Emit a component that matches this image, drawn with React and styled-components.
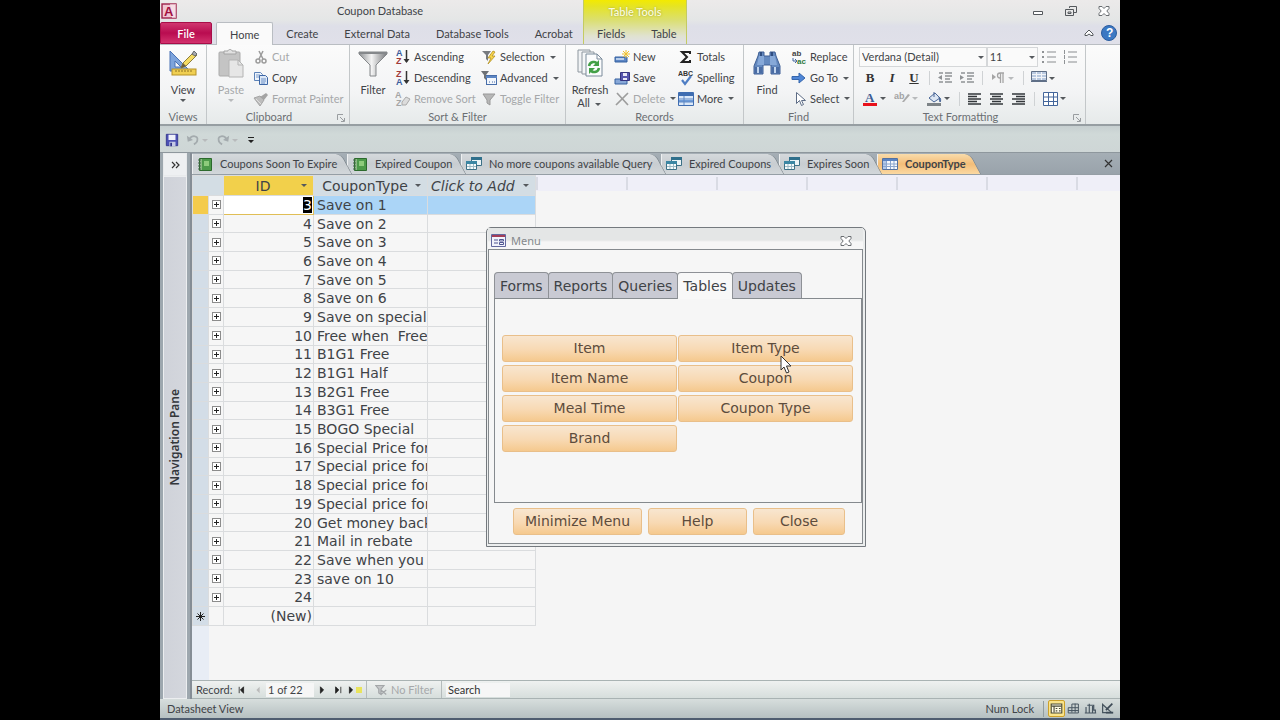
import { useState } from 'react';
import styled, { createGlobalStyle, css } from 'styled-components';

const colors = {
  text: '#3f4347',
  muted: '#a6a8aa',
  line: '#9aa3a8',
  strip: '#9da7ae',
  orange: '#f5c98e',
};

const uiFont = `Lato, 'Noto Sans', sans-serif`;
const sheetFont = `'DejaVu Sans', Verdana, sans-serif`;

const GlobalStyle = createGlobalStyle`
  * {
    box-sizing: border-box;
  }
  body {
    margin: 0;
    background: #000;
    font-family: ${uiFont};
    font-size: 11px;
    line-height: 16px;
    color: ${colors.text};
  }
  button, input, select {
    font: inherit;
    color: inherit;
    margin: 0;
    padding: 0;
    border: 0;
    background: none;
  }
  svg {
    display: block;
    flex: none;
  }
`;

const Screen = styled.div`
  display: flex;
  flex-direction: column;
  width: 75%;
  min-width: 960px;
  min-height: 100vh;
  margin: 0 auto;
  background: #cdd6d6;
  overflow: hidden;
`;

/* title bar and ribbon tabs */

const Header = styled.header`
  display: flex;
  height: 44px;
  background: linear-gradient(#eceaea, #e4e6e6 20px, #dedfe8 26px, #e0e0e9);
`;

const HeaderMain = styled.div`
  width: 423px;
`;

const TitleRow = styled.div`
  display: flex;
  align-items: center;
  height: 22px;
  padding-left: 1px;
`;

const Title = styled.h1`
  flex: 1;
  margin: 0;
  font-size: 11px;
  font-weight: 400;
  text-align: center;
`;

const TabRow = styled.nav`
  display: flex;
  height: 22px;
`;

const RibbonTab = styled.button`
  flex: none;
  padding: 1px 13px 0;
  height: 22px;
  white-space: nowrap;
  ${({ $file }) =>
    $file &&
    css`
      width: 52px;
      margin-right: 4px;
      color: #fff;
      font-weight: 600;
      border: 1px solid #a80d48;
      border-radius: 2px 2px 0 0;
      background: linear-gradient(#d0356f, #b90c50 50%, #d3326d);
    `}
  ${({ $active }) =>
    $active &&
    css`
      height: 23px;
      border: 1px solid #b9bdc2;
      border-bottom: 0;
      border-radius: 2px 2px 0 0;
      background: #fafafa;
      z-index: 1;
    `}
`;

const ContextGroup = styled.div`
  width: 104px;
  border: solid #c4cb62;
  border-width: 0 1px;
  background: linear-gradient(#f3ea00, #e6e422 6px, #dbdf70 20px, #e0e2d0 36px, #e0e0e9);
`;

const ContextTitle = styled.div`
  height: 22px;
  padding-top: 4px;
  text-align: center;
  font-weight: 600;
  color: #fbfbd8;
  text-shadow: 0 0 2px #98993a;
`;

const HeaderSide = styled.div`
  flex: 1;
  display: flex;
  flex-direction: column;
`;

const WindowButtons = styled.div`
  display: flex;
  justify-content: flex-end;
  align-items: center;
  gap: 21px;
  height: 22px;
  padding-right: 10px;
`;

const HelpButtons = styled.div`
  display: flex;
  justify-content: flex-end;
  align-items: center;
  gap: 7px;
  height: 22px;
  padding-right: 3px;
`;

/* ribbon */

const Ribbon = styled.section`
  display: flex;
  height: 82px;
  border-top: 1px solid #b9bdc2;
  border-bottom: 2px solid #969ea2;
  background: linear-gradient(#fbfbfb, #f3f4f5 60%, #e6eaea);
`;

const Group = styled.div`
  display: flex;
  flex-direction: column;
  width: ${({ $width }) => $width}px;
  border-right: 1px solid #c3c7c9;
`;

const GroupBody = styled.div`
  display: flex;
  height: 64px;
  padding: 2px 0 0 ${({ $pad }) => $pad}px;
  gap: ${({ $gap }) => $gap || 8}px;
`;

const GroupLabel = styled.div`
  display: flex;
  justify-content: center;
  align-items: center;
  height: 15px;
  padding-right: ${({ $pad = 6 }) => $pad}px;
  color: #6b6f73;
  position: relative;
`;

const Launcher = styled.button`
  position: absolute;
  right: 4px;
  top: 5px;
`;

const LargeButton = styled.button`
  display: flex;
  flex-direction: column;
  align-items: center;
  line-height: 13px;
  width: ${({ $width }) => $width || 32}px;
  white-space: nowrap;
  &:disabled {
    color: ${colors.muted};
  }
  & svg:first-child {
    margin: 1px 0 3px;
  }
`;

const SmallColumn = styled.div`
  display: flex;
  flex-direction: column;
  width: ${({ $width }) => $width}px;
`;

const SmallButton = styled.button`
  display: flex;
  align-items: center;
  gap: 3px;
  height: 21px;
  white-space: nowrap;
  &:disabled {
    color: ${colors.muted};
  }
`;

const Caret = styled.span`
  border: solid transparent;
  border-width: 3px 3px 0;
  border-top-color: ${({ $faded }) => ($faded ? '#b8babc' : '#55595d')};
  margin: ${({ $below }) => ($below ? '3px 0 0' : '0 2px')};
  display: inline-block;
  vertical-align: middle;
`;

const FormatArea = styled.div`
  display: flex;
  flex-direction: column;
  height: 64px;
  padding: 2px 4px 0 5px;
`;

const FormatRow = styled.div`
  display: flex;
  align-items: center;
  height: 21px;
`;

const SelectBox = styled.label`
  display: flex;
  align-items: center;
  width: ${({ $width }) => $width}px;
  height: 20px;
  border: 1px solid #d5d7d9;
  background: #fafafa;
  & select {
    flex: 1;
    min-width: 0;
    appearance: none;
    padding-left: 2px;
    outline: 0;
  }
`;

const ToolButton = styled.button`
  display: flex;
  align-items: center;
  justify-content: center;
  width: ${({ $width }) => $width || 22}px;
  height: 20px;
`;

const Glyph = styled.span`
  font-family: 'Liberation Serif', serif;
  font-size: 13px;
  font-weight: 700;
  font-style: ${({ $italic }) => ($italic ? 'italic' : 'normal')};
  text-decoration: ${({ $underline }) => ($underline ? 'underline' : 'none')};
  color: #333;
`;

const Divider = styled.span`
  width: 1px;
  height: 14px;
  margin: 0 4px;
  background: #cfd2d4;
`;

const QuickAccess = styled.div`
  display: flex;
  align-items: center;
  gap: 8px;
  height: 27px;
  padding: 2px 0 0 5px;
  background: linear-gradient(#c6cfd0, #d0d9d8 8px, #ced6d6);
  border-bottom: 1px solid #8e979d;
`;

/* work area */

const WorkArea = styled.main`
  display: flex;
  flex: 1;
  position: relative;
`;

const NavPane = styled.aside`
  display: flex;
  flex-direction: column;
  width: 32px;
  padding: 0 3px 0 3px;
  background: ${colors.strip};
  border-right: 2px solid #858d95;
`;

const NavToggle = styled.button`
  display: flex;
  align-items: center;
  justify-content: center;
  height: 23px;
  border: 1px solid #e8eaec;
  background: #eef0f2;
`;

const NavBody = styled.div`
  flex: 1;
  display: flex;
  align-items: center;
  justify-content: center;
  border: 1px solid #eceef0;
  background: linear-gradient(90deg, #cfd2d9, #d4d7dd);
  & span {
    writing-mode: vertical-rl;
    transform: rotate(180deg);
    font-family: 'Noto Sans', sans-serif;
    font-size: 12px;
    font-weight: 600;
    color: #34373b;
  }
`;

const Document = styled.div`
  display: flex;
  flex-direction: column;
  flex: 1;
  min-width: 0;
`;

const DocTabs = styled.div`
  display: flex;
  height: 22px;
  background: linear-gradient(#a5aeb5, #99a3ab);
  border-bottom: 1px solid #959ea5;
`;

const DocTab = styled.button`
  display: flex;
  align-items: center;
  gap: 7px;
  width: ${({ $width }) => $width}px;
  padding-left: 5px;
  font-weight: ${({ $active }) => ($active ? 700 : 400)};
  white-space: nowrap;
  position: relative;
  isolation: isolate;
  z-index: ${({ $order }) => $order};
  &::before,
  &::after {
    content: '';
    position: absolute;
    z-index: -1;
    top: 1px;
    bottom: 0;
    background: ${({ $active }) =>
      $active
        ? 'linear-gradient(#f9dcab, #f3bd78 50%, #fbd9a2)'
        : 'linear-gradient(#d5d9dc, #c8cdd1 50%, #d2d7da)'};
  }
  &::before {
    right: 0;
    width: 40px;
    border-right: 1px solid #828b91;
    border-top-right-radius: 6px;
    transform: skewX(28deg);
  }
  &::after {
    left: 0;
    right: 24px;
    border-left: 1px solid #eef0f1;
  }
`;

const DocClose = styled.button`
  margin: 0 7px 0 auto;
`;

const Sheet = styled.div`
  flex: 1;
  background:
    repeating-linear-gradient(90deg, transparent 0 74px, #d9dbe4 74px 76px, transparent 76px 90px) 0 2px / 100% 13px no-repeat,
    linear-gradient(#efeff8, #efeff8) 0 0 / 100% 16px no-repeat,
    linear-gradient(90deg, #e8edf5 17px, #f5f5f5 17px);
`;

const Grid = styled.table`
  width: 343px;
  height: 451px;
  table-layout: fixed;
  border-collapse: collapse;
  font-family: ${sheetFont};
  font-size: 14px;
  line-height: 16px;
  background: #f6f6f6;
  & th {
    height: 20px;
  }
  & td,
  & th {
    padding: 0;
    border: 1px solid #dadcde;
    white-space: nowrap;
    overflow: hidden;
  }
`;

const HeadCell = styled.th`
  font-weight: 400;
  font-style: ${({ $italic }) => ($italic ? 'italic' : 'normal')};
  background: ${({ $active }) => ($active ? '#f2d04b' : '#d3dde4')};
`;

const HeadInner = styled.div`
  display: flex;
  align-items: center;
  justify-content: space-between;
  padding: 0 4px 0 3px;
  & > span:first-child {
    flex: 1;
    text-align: ${({ $left }) => ($left ? 'left' : 'center')};
  }
`;

const Row = styled.tr`
  ${({ $current }) =>
    $current &&
    css`
      background: #abd5f7;
    `}
`;

const Selector = styled.td`
  background: ${({ $current }) => ($current ? '#f4cb4c' : '#d3dde7')};
  color: #222;
  & svg {
    margin: 0 auto;
  }
`;

const ExpandCell = styled.td`
  background: #f6f6f6;
`;

const ExpandButton = styled.button`
  display: flex;
  align-items: center;
  justify-content: center;
  width: 9px;
  height: 9px;
  margin: 0 auto;
  border: 1px solid #8c8c8c;
  background: #fff;
`;

const IdCell = styled.td`
  text-align: right;
  && {
    padding-right: 1px;
  }
  ${({ $current }) =>
    $current &&
    css`
      background: #fff;
      && {
        border-color: #e0be55;
      }
    `}
  & mark {
    color: #fff;
    background: #000;
  }
`;

const NameCell = styled.td`
  && {
    padding-left: 3px;
    white-space: pre;
  }
`;

const RecordBar = styled.div`
  display: flex;
  align-items: center;
  height: 19px;
  padding-left: 4px;
  border-top: 1px solid #a9b3b3;
  border-bottom: 1px solid #a9b3b3;
  background: linear-gradient(#eff1f0, #d6dedc);
  & label {
    width: 38px;
  }
`;

const RecordInput = styled.input`
  width: ${({ $width }) => $width}px;
  height: 14px;
  padding-left: 2px;
  background: #f6f6f6;
  outline: 0;
  &::placeholder {
    color: #333;
    opacity: 1;
  }
`;

const RecordButton = styled.button`
  display: flex;
  justify-content: center;
  width: 16px;
`;

const NoFilter = styled.button`
  display: flex;
  align-items: center;
  gap: 4px;
  width: 76px;
  height: 17px;
  margin: 0 4px;
  padding-left: 8px;
  color: ${colors.muted};
  border: solid #b4bbbb;
  border-width: 0 1px;
`;

const StatusBar = styled.footer`
  display: flex;
  align-items: center;
  height: 21px;
  padding: 0 4px 0 7px;
  background: linear-gradient(#d7dedd, #b6c0c1);
  border-bottom: 2px solid #4f5d70;
`;

const StatusRight = styled.div`
  display: flex;
  align-items: center;
  margin-left: auto;
  & > span {
    padding-right: 9px;
    margin-right: 4px;
    border-right: 1px solid #939d9f;
  }
`;

const ViewButton = styled.button`
  display: flex;
  align-items: center;
  justify-content: center;
  width: 17px;
  height: 17px;
  border: 1px solid ${({ $active }) => ($active ? '#cda12b' : 'transparent')};
  border-radius: 2px;
  background: ${({ $active }) => ($active ? '#fbe48a' : 'none')};
`;

/* floating menu form */

const MenuWindow = styled.section`
  position: absolute;
  left: 326px;
  top: 74px;
  width: 380px;
  padding: 0 2px 2px 1px;
  border: 1px solid #74797e;
  border-radius: 5px 5px 0 0;
  background: #eceeee;
  font-family: ${sheetFont};
  font-size: 14px;
  z-index: 10;
`;

const MenuTitle = styled.div`
  display: flex;
  align-items: center;
  gap: 4px;
  height: 21px;
  padding: 5px 11px 0 3px;
  background: linear-gradient(#e4e6e6 12px, #f6f6f6 14px);
  font-family: 'Noto Sans', sans-serif;
  font-size: 11px;
  color: #85898c;
  & button {
    margin-left: auto;
  }
`;

const MenuBody = styled.div`
  padding: 22px 0 8px 5px;
  border: 1px solid #858a8e;
  background: #f6f6f6;
`;

const MenuTabs = styled.div`
  display: flex;
  height: 26px;
`;

const MenuTab = styled.button`
  padding: 0 5px;
  margin-right: -1px;
  border: 1px solid #8e9196;
  border-bottom: 0;
  border-radius: 4px 4px 0 0;
  white-space: nowrap;
  background: ${({ $active }) => ($active ? '#f8f8f8' : '#c9cad3')};
  ${({ $active }) =>
    $active &&
    css`
      height: 27px;
      z-index: 1;
    `}
`;

const MenuPanel = styled.div`
  display: grid;
  grid-template-columns: 1fr 1fr;
  grid-auto-rows: 27px;
  align-content: start;
  gap: 3px 1px;
  height: 205px;
  padding: 36px 8px 0 7px;
  border: 1px solid #858a8e;
`;

const FormButton = styled.button`
  height: 27px;
  width: ${({ $width }) => ($width ? `${$width}px` : 'auto')};
  padding-bottom: 2px;
  border: 1px solid #e9bf8a;
  border-radius: 3px;
  color: #5d4c3c;
  background: linear-gradient(#f8e6d0, #f8d9b3 55%, ${colors.orange});
`;

const MenuFooter = styled.div`
  display: flex;
  gap: 6px;
  padding: 5px 0 0 19px;
`;

const Pointer = styled.svg`
  position: absolute;
  left: 620px;
  top: 202px;
  z-index: 20;
`;

const Icon = ({ size = 16, children }) => (
  <svg width={size} height={size} viewBox="0 0 16 16" fill="none" aria-hidden="true">
    {children}
  </svg>
);

const BigIcon = ({ children }) => (
  <svg width="32" height="32" viewBox="0 0 32 32" fill="none" aria-hidden="true">
    {children}
  </svg>
);

const glyphText = { fontFamily: 'Liberation Sans, sans-serif', fontWeight: 700 };

const AccessLogo = () => (
  <Icon>
    <rect x="1" y="1" width="14" height="14" fill="#f0c5d3" stroke="#9d2049" strokeWidth="1.4" />
    <path d="M9 1h6v14h-4z" fill="#fbeef2" opacity=".6" />
    <text x="3" y="13" fontSize="13" fill="#a1103f" style={glyphText}>A</text>
  </Icon>
);

const CloseX = ({ size = 12 }) => (
  <svg width={size} height={size} viewBox="0 0 12 12" fill="#fff" aria-hidden="true">
    <path d="M1 1.500h3l2 2 2-2h3v2L8.800 6 11 8.500v2H8l-2-2-2 2H1v-2L3.200 6 1 3.500z" stroke="#6a6e72" strokeWidth="1" />
  </svg>
);

const ViewIcon = () => (
  <BigIcon>
    <path d="M3 3v20h20z" fill="#7da4dc" stroke="#4a72b5" />
    <path d="M8 13v6h6z" fill="#f5f7fa" stroke="#4a72b5" />
    <rect x="5" y="21" width="24" height="6" fill="#f0cf52" stroke="#b69227" />
    <path d="M9 22v2m3-2v2m3-2v2m3-2v2m3-2v2m3-2v2" stroke="#8f7220" />
    <path d="M14 20l2-5L27 4l3 3-11 11z" fill="#f5dc63" stroke="#8c7d3d" />
    <path d="M25 6l2-3 3 3-2 2z" fill="#a5a8ad" stroke="#66696e" />
    <path d="M14 20l2-5 3 3z" fill="#675b40" />
  </BigIcon>
);

const PasteIcon = () => (
  <BigIcon>
    <rect x="4" y="4" width="21" height="24" rx="1" fill="#c4c4c4" stroke="#ababab" />
    <path d="M9 6V3h4c0-2 4-2 4 0h4v3z" fill="#e1e1e1" stroke="#a4a4a4" />
    <path d="M14 12h9l5 5v12H14z" fill="#e6e6e6" stroke="#b4b4b4" />
    <path d="M23 12v5h5" stroke="#b4b4b4" />
  </BigIcon>
);

const FilterIcon = () => (
  <BigIcon>
    <defs>
      <linearGradient id="funnel">
        <stop offset="0" stopColor="#8c8f92" />
        <stop offset=".45" stopColor="#f4f4f4" />
        <stop offset="1" stopColor="#77797c" />
      </linearGradient>
    </defs>
    <path d="M2 4h28v2L19 17v11h-6V17L2 6z" fill="url(#funnel)" stroke="#85888b" />
    <path d="M2 4h28v2H2z" fill="#85888b" />
  </BigIcon>
);

const RefreshIcon = () => (
  <BigIcon>
    <path d="M4 2h12v22H4z" fill="#f1f3f5" stroke="#8e979f" />
    <path d="M8 4h12v22H8z" fill="#f5f7f8" stroke="#8e979f" />
    <path d="M12 6h11l5 5v17H12z" fill="#fbfcfd" stroke="#7b8b9b" />
    <path d="M23 6v5h5" stroke="#7b8b9b" />
    <path d="M15 18c1-5 7-5 8-2" stroke="#43a047" strokeWidth="2.500" />
    <path d="M25 12v6h-6z" fill="#43a047" />
    <path d="M25 20c-1 5-7 5-8 2" stroke="#43a047" strokeWidth="2.500" />
    <path d="M15 26v-6h6z" fill="#43a047" />
  </BigIcon>
);

const FindIcon = () => (
  <BigIcon>
    <path d="M8 4h5v4h6V4h5l1 4 4 10v8h-9v-9h-8v9H3v-8L7 8z" fill="#6489bf" stroke="#3e5f95" />
    <path d="M8 8h5v9H6zM19 8h5l2 9h-7z" fill="#86a8d8" />
    <path d="M4 19h7v6H4zM21 19h7v6h-7z" fill="#4a6ca4" />
    <path d="M6 19h2v6H6zM23 19h2v6h-2z" fill="#c1d5ee" />
    <path d="M9 4h2v4H9zM20 4h2v4h-2z" fill="#2f4d80" />
  </BigIcon>
);

const CutIcon = () => (
  <Icon>
    <path d="M6 2l4 8M10 2L6 10" stroke="#9b9b9b" strokeWidth="1.500" />
    <circle cx="5" cy="12" r="2" stroke="#9b9b9b" strokeWidth="1.500" />
    <circle cx="11" cy="12" r="2" stroke="#9b9b9b" strokeWidth="1.500" />
  </Icon>
);

const CopyIcon = () => (
  <Icon>
    <path d="M1.500 2.500h6l2 2v6h-8z" fill="#eef4fb" stroke="#5c82b8" />
    <path d="M3 5h4M3 7h4" stroke="#7d9ccb" />
    <path d="M6.500 5.500h6l2 2v7h-8z" fill="#dce8f7" stroke="#3d66a5" />
    <path d="M8 9h5M8 11h5M8 13h4" stroke="#6d90c6" />
  </Icon>
);

const PainterIcon = () => (
  <Icon>
    <path d="M1 7l6-2 4 4-4 6z" fill="#bdbdbd" stroke="#a5a5a5" />
    <path d="M7 6l6-4 2 2-4 5z" fill="#a4a4a4" />
    <path d="M3 8l5 5" stroke="#dedede" />
  </Icon>
);

const SortIcon = ({ top, bottom, topColor, bottomColor }) => (
  <Icon>
    <text x="1" y="7" fontSize="9" fill={topColor} style={glyphText}>{top}</text>
    <text x="1" y="15" fontSize="9" fill={bottomColor} style={glyphText}>{bottom}</text>
    <path d="M11.500 1v12" stroke="#333" strokeWidth="1.500" />
    <path d="M8.500 10h6l-3 4z" fill="#333" />
  </Icon>
);

const RemoveSortIcon = () => (
  <Icon>
    <text x="0" y="7" fontSize="9" fill="#a5a5a5" style={glyphText}>A</text>
    <text x="1" y="15" fontSize="9" fill="#a5a5a5" style={glyphText}>Z</text>
    <path d="M7 11l4-5 4 2-4 6-4 0z" fill="#dcdcdc" stroke="#aaa" />
  </Icon>
);

const SelectionIcon = () => (
  <Icon>
    <path d="M1 2h9L7 6v6L5 10V6z" fill="#777b80" />
    <path d="M12 2L7 9h3l-3 6 7-8h-3l3-4z" fill="#f8d54a" stroke="#b18f22" strokeWidth=".8" />
  </Icon>
);

const AdvancedIcon = () => (
  <Icon>
    <rect x="5.500" y="5.500" width="10" height="9" fill="#f2f6fb" stroke="#476da9" />
    <path d="M5 6h11v2H5z" fill="#5c85c3" />
    <path d="M8 12h1m2 0h1m1 0h1" stroke="#476da9" />
    <path d="M0 1h8L5 5v5L3 8V5z" fill="#6d7176" />
  </Icon>
);

const FunnelIcon = () => (
  <Icon>
    <path d="M2 3h12L9 9v5l-3-2V9z" fill="#b7b7b7" stroke="#999" />
  </Icon>
);

const NewIcon = () => (
  <Icon>
    <path d="M1 8h12v5H1z" fill="#5d86c5" stroke="#35609f" />
    <path d="M2 9h8v2H2z" fill="#b7cdea" />
    <path d="M12 1v8M8 5h8M9 2l6 6M15 2L9 8" stroke="#eec02e" />
  </Icon>
);

const SaveRecordIcon = () => (
  <Icon>
    <path d="M1 9h12v5H1z" fill="#88a8d8" stroke="#35609f" />
    <path d="M6.500 2.500h9v8h-9z" fill="#5555ae" stroke="#34347f" />
    <path d="M9 3h4v3H9zM9 8h4v2H9z" fill="#e9e9f7" />
  </Icon>
);

const DeleteIcon = () => (
  <Icon>
    <path d="M3 2l11 12M14 2L2 14" stroke="#9d9d9d" strokeWidth="1.700" />
  </Icon>
);

const SigmaIcon = () => (
  <Icon>
    <path d="M12 5V3H4l5 5-5 5h8v-2" stroke="#222" strokeWidth="2" />
  </Icon>
);

const SpellingIcon = () => (
  <Icon>
    <text x="0" y="6" fontSize="7" fill="#333" style={glyphText}>ABC</text>
    <path d="M4 10l3 4 6-8" stroke="#4f7ec4" strokeWidth="2.200" />
  </Icon>
);

const MoreIcon = () => (
  <Icon>
    <path d="M.5 1.500h15v13H.5z" fill="#dbe8f8" stroke="#3f6db1" />
    <path d="M1 2h14v3H1z" fill="#3f6db1" />
    <path d="M1 9h14v2H1z" fill="#6c9ad8" />
    <path d="M6 5v9M1 8h14M1 11h14" stroke="#5f88c4" />
  </Icon>
);

const ReplaceIcon = () => (
  <Icon>
    <text x="1" y="7" fontSize="8" fill="#444" style={glyphText}>ab</text>
    <text x="6" y="15" fontSize="8" fill="#2f7a3c" style={glyphText}>ac</text>
    <path d="M2 9v3h3M4 10l2 2-2 2" stroke="#44679f" />
  </Icon>
);

const GoToIcon = () => (
  <Icon>
    <path d="M1 6.500h7V3l6 5-6 5V9.500H1z" fill="#4f86d6" stroke="#3566ad" />
  </Icon>
);

const CursorIcon = () => (
  <Icon>
    <path d="M5.500 1.500v11l3-3 2 5 2-1-2-4h4z" fill="#fff" stroke="#5d6c85" />
  </Icon>
);

const BulletsIcon = ({ numbered }) => (
  <Icon>
    <path d="M6 3h9M6 8h9M6 13h9" stroke="#8a8d90" />
    {numbered ? (
      <path d="M2.500 1v4M2.500 6v4M2.500 11v4" stroke="#909396" />
    ) : (
      <path d="M1 2h2v2H1zM1 7h2v2H1zM1 12h2v2H1z" fill="#909396" />
    )}
  </Icon>
);

const IndentIcon = ({ out }) => (
  <Icon>
    <path d="M2 3h4M8 3h7M8 6h7M8 9h5M2 12h4M8 12h7" stroke="#8f9295" strokeWidth="1.400" />
    <path d={out ? 'M5 5L1 7.500 5 10z' : 'M1 5l4 2.500L1 10z'} fill="#8f9295" />
  </Icon>
);

const ParagraphIcon = () => (
  <Icon>
    <path d="M2 4l4 3-4 3z" fill="#a5a5a5" />
    <path d="M14 3h-4a2.500 2.500 0 0 0 0 5M10.500 3v10M13 3v10" stroke="#a5a5a5" strokeWidth="1.300" />
  </Icon>
);

const AlignIcon = ({ d }) => (
  <Icon>
    <path d={d} stroke="#33373b" strokeWidth="1.300" />
  </Icon>
);

const GridIcon = () => (
  <Icon>
    <path d="M1.500 1.500h14v13h-14zM6.500 1.500v13M11.500 1.500v13M1.500 6h14M1.500 10.500h14" fill="#fff" stroke="#44669b" />
  </Icon>
);

const RowsIcon = () => (
  <Icon>
    <path d="M.5 1.500h15v9H.5z" fill="#b9c9e0" stroke="#5f6f87" />
    <path d="M1 4.500h14M1 7.500h14M5.500 2v8M10.500 2v8" stroke="#f1f4f8" />
    <path d="M0 11.500h16" stroke="#5f6f87" />
  </Icon>
);

const FontColorIcon = () => (
  <Icon>
    <text x="3" y="11" fontSize="13" fill="#3b5c94" style={{ fontFamily: 'Liberation Serif, serif', fontWeight: 700 }}>A</text>
    <path d="M1 12h14v3H1z" fill="#e8121c" />
  </Icon>
);

const HighlightIcon = () => (
  <Icon>
    <text x="0" y="8" fontSize="9" fill="#a3a3a3" style={glyphText}>ab</text>
    <path d="M8 11l6-8 2 1-6 7z" fill="#aaa" />
  </Icon>
);

const FillIcon = () => (
  <Icon>
    <path d="M3 7l6-5 5 5-6 4z" fill="#dce6f3" stroke="#4a6797" />
    <path d="M8 1v5M13 6c2 1 2 4 1 5z" stroke="#4a6797" fill="#4a77b8" />
    <path d="M1 12h14v3H1z" fill="#7d8387" />
  </Icon>
);

const FloppyIcon = () => (
  <Icon size={14}>
    <path d="M1.500 1.500h13v13h-13z" fill="#4c50b5" stroke="#31348a" />
    <path d="M4 2h8v6H4z" fill="#eff1fa" />
    <path d="M5 10h7v5H5z" fill="#c5c9e5" />
    <path d="M6 11h2v4H6z" fill="#31348a" />
  </Icon>
);

const UndoIcon = ({ flip }) => (
  <Icon size={14}>
    <g transform={flip ? 'translate(16 0) scale(-1 1)' : undefined}>
      <path d="M4 7c3-5 10-4 9 1 0 3-2 4-4 5" stroke="#a4abae" strokeWidth="2" />
      <path d="M1 3l1 7 6-2z" fill="#a4abae" />
    </g>
  </Icon>
);

const ReportIcon = () => (
  <Icon>
    <path d="M2.500 2.500h12v12h-12z" fill="#4d9a4a" stroke="#2c6a2d" />
    <path d="M3 3h2v11H3z" fill="#8cba84" />
    <path d="M7 5h5v5H7z" fill="#8ecb7c" />
    <path d="M1 4h3M1 7h3M1 10h3M1 13h3" stroke="#45664a" />
  </Icon>
);

const QueryIcon = () => (
  <Icon>
    <path d="M5.500 1.500h10v8h-10z" fill="#eaf3f6" stroke="#3d7086" />
    <path d="M5 1h11v3H5z" fill="#2f6f8b" />
    <path d="M.5 5.500h10v8H.5z" fill="#f5fafb" stroke="#3d7086" />
    <path d="M0 5h11v3H0z" fill="#3b86a3" />
    <path d="M4 8v5M7.500 8v5M1 10.500h9" stroke="#9cb9c5" />
  </Icon>
);

const DatasheetIcon = () => (
  <Icon>
    <path d="M.5 2.500h15v11H.5z" fill="#f8fafd" stroke="#54719f" />
    <path d="M1 3h14v2H1z" fill="#5b83c1" />
    <path d="M1 5h3v8H1z" fill="#b2c9e9" />
    <path d="M4.500 5v8M8.500 5v8M12 5v8M1 8h14M1 10.500h14" stroke="#89a4cd" />
  </Icon>
);

const FormIcon = () => (
  <Icon>
    <path d="M.5 1.500h14v12H.5z" fill="#f2f3fb" stroke="#63689f" />
    <path d="M1 2h13v2H1z" fill="#a33d58" />
    <path d="M3 7h4M3 10h4" stroke="#4e5590" />
    <path d="M8.500 6.500h4v1.500h-4zM8.500 9.500h4v2h-4z" stroke="#4e5590" />
  </Icon>
);

const ViewGlyph = ({ kind }) => (
  <Icon size={13}>
    {kind === 'datasheet' && (
      <>
        <path d="M1.500 2.500h13v11h-13z" fill="#fffbe6" stroke="#4b4a36" strokeWidth="1.400" />
        <path d="M2 5h12M5 5v8M7 8h2m2 0h2M7 11h2m2 0h2" stroke="#4b4a36" strokeWidth="1.400" />
      </>
    )}
    {kind === 'pivot' && (
      <path d="M6 2.500h8v11H1.500V7H6zM6 7h8M1.500 10.500h12.500M6 7v6M10 2v11" stroke="#465460" strokeWidth="1.200" />
    )}
    {kind === 'chart' && (
      <path d="M2.500 6v7M6.500 2v11M10.500 5v8M1 13.500h14M4 4h8v6h2v3" stroke="#465460" strokeWidth="1.400" />
    )}
    {kind === 'design' && (
      <>
        <path d="M2 3v10h11z" stroke="#46545f" strokeWidth="1.500" />
        <path d="M6 10l8-8M6 13h9" stroke="#3d4a56" strokeWidth="2" />
      </>
    )}
  </Icon>
);

const LauncherIcon = () => (
  <svg width="8" height="8" viewBox="0 0 8 8" fill="none" aria-hidden="true">
    <path d="M.5 6V.5H6M3 3l4 4M7.500 4v3.500H4" stroke="#999da0" />
  </svg>
);

const recordPaths = {
  first: 'M1.500 1v8M7 1L3 5l4 4z',
  previous: 'M7 1L3 5l4 4z',
  next: 'M3 1l4 4-4 4z',
  last: 'M2 1l4 4-4 4zM8.500 1v8',
};

const RecordIcon = ({ kind }) => (
  <svg width="10" height="8" viewBox="0 0 10 10" aria-hidden="true">
    <path
      d={recordPaths[kind]}
      fill={kind === 'previous' ? '#bbb' : '#222'}
      stroke={kind === 'previous' ? 'none' : '#222'}
    />
  </svg>
);

const ribbonTabs = ['Home', 'Create', 'External Data', 'Database Tools', 'Acrobat'];

const docTabs = [
  { label: 'Coupons Soon To Expire', icon: ReportIcon, width: 155 },
  { label: 'Expired Coupon', icon: ReportIcon, width: 114 },
  { label: 'No more coupons available Query', icon: QueryIcon, width: 200 },
  { label: 'Expired Coupons', icon: QueryIcon, width: 118 },
  { label: 'Expires Soon', icon: QueryIcon, width: 98 },
  { label: 'CouponType', icon: DatasheetIcon, width: 99, active: true },
];

const couponTypes = [
  [3, 'Save on 1'],
  [4, 'Save on 2'],
  [5, 'Save on 3'],
  [6, 'Save on 4'],
  [7, 'Save on 5'],
  [8, 'Save on 6'],
  [9, 'Save on special'],
  [10, 'Free when  Free'],
  [11, 'B1G1 Free'],
  [12, 'B1G1 Half'],
  [13, 'B2G1 Free'],
  [14, 'B3G1 Free'],
  [15, 'BOGO Special'],
  [16, 'Special Price for'],
  [17, 'Special price for'],
  [18, 'Special price for'],
  [19, 'Special price for'],
  [20, 'Get money back'],
  [21, 'Mail in rebate'],
  [22, 'Save when you'],
  [23, 'save on 10'],
  [24, ''],
];

const menuTabs = ['Forms', 'Reports', 'Queries', 'Tables', 'Updates'];
const menuButtons = ['Item', 'Item Type', 'Item Name', 'Coupon', 'Meal Time', 'Coupon Type', 'Brand'];

function Small({ icon, label, caret, disabled }) {
  return (
    <SmallButton disabled={disabled}>
      {icon}
      {label}
      {caret && <Caret />}
    </SmallButton>
  );
}

function TopHeader() {
  return (
    <Header>
      <HeaderMain>
        <TitleRow>
          <AccessLogo />
          <Title>Coupon Database</Title>
        </TitleRow>
        <TabRow>
          <RibbonTab $file>File</RibbonTab>
          {ribbonTabs.map((tab) => (
            <RibbonTab key={tab} $active={tab === 'Home'}>
              {tab}
            </RibbonTab>
          ))}
        </TabRow>
      </HeaderMain>
      <ContextGroup>
        <ContextTitle>Table Tools</ContextTitle>
        <TabRow>
          <RibbonTab>Fields</RibbonTab>
          <RibbonTab>Table</RibbonTab>
        </TabRow>
      </ContextGroup>
      <HeaderSide>
        <WindowButtons>
          <button aria-label="Minimize">
            <svg width="12" height="12" viewBox="0 0 12 12">
              <path d="M1.500 6.500h9v3h-9z" fill="#fff" stroke="#54585c" />
            </svg>
          </button>
          <button aria-label="Restore">
            <svg width="12" height="12" viewBox="0 0 12 12" fill="none">
              <path d="M4.500 3V1.500h7v6H9M.5 4.500h8v6h-8zM3 7h3v1.500H3z" stroke="#54585c" />
            </svg>
          </button>
          <button aria-label="Close window">
            <CloseX size={12} />
          </button>
        </WindowButtons>
        <HelpButtons>
          <button aria-label="Collapse ribbon">
            <svg width="10" height="8" viewBox="0 0 10 8">
              <path d="M1 5l4-4 4 4v1.500H7L5 5 3 6.500H1z" fill="#fff" stroke="#54585c" />
            </svg>
          </button>
          <button aria-label="Help">
            <Icon>
              <circle cx="8" cy="8" r="7.500" fill="#3b78c3" stroke="#2a5c9e" />
              <text x="5" y="12" fontSize="12" fill="#fff" style={glyphText}>?</text>
            </Icon>
          </button>
        </HelpButtons>
      </HeaderSide>
    </Header>
  );
}

function TextFormatting() {
  return (
    <Group $width={232}>
      <FormatArea>
        <FormatRow>
          <SelectBox $width={130}>
            <select aria-label="Font">
              <option>Verdana (Detail)</option>
            </select>
            <Caret />
          </SelectBox>
          <SelectBox $width={52}>
            <select aria-label="Font size">
              <option>11</option>
            </select>
            <Caret />
          </SelectBox>
          <ToolButton aria-label="Bullets"><BulletsIcon /></ToolButton>
          <ToolButton aria-label="Numbering"><BulletsIcon numbered /></ToolButton>
        </FormatRow>
        <FormatRow>
          <ToolButton aria-label="Bold"><Glyph>B</Glyph></ToolButton>
          <ToolButton aria-label="Italic"><Glyph $italic>I</Glyph></ToolButton>
          <ToolButton aria-label="Underline"><Glyph $underline>U</Glyph></ToolButton>
          <Divider />
          <ToolButton aria-label="Decrease indent"><IndentIcon out /></ToolButton>
          <ToolButton aria-label="Increase indent"><IndentIcon /></ToolButton>
          <Divider />
          <ToolButton aria-label="Text direction" $width={32}><ParagraphIcon /><Caret $faded /></ToolButton>
          <Divider />
          <ToolButton aria-label="Gridlines" $width={32}><RowsIcon /><Caret /></ToolButton>
        </FormatRow>
        <FormatRow>
          <ToolButton aria-label="Font color" $width={32}><FontColorIcon /><Caret /></ToolButton>
          <ToolButton aria-label="Highlight" $width={32}><HighlightIcon /><Caret $faded /></ToolButton>
          <ToolButton aria-label="Fill color" $width={32}><FillIcon /><Caret /></ToolButton>
          <Divider />
          <ToolButton aria-label="Align left"><AlignIcon d="M1 3h13M1 5.500h9M1 8h13M1 10.500h9M1 13h13" /></ToolButton>
          <ToolButton aria-label="Center"><AlignIcon d="M1 3h13M3 5.500h9M1 8h13M3 10.500h9M1 13h13" /></ToolButton>
          <ToolButton aria-label="Align right"><AlignIcon d="M1 3h13M5 5.500h9M1 8h13M5 10.500h9M1 13h13" /></ToolButton>
          <Divider />
          <ToolButton aria-label="Borders" $width={32}><GridIcon /><Caret /></ToolButton>
        </FormatRow>
      </FormatArea>
      <GroupLabel $pad={18}>
        Text Formatting
        <Launcher aria-label="Text formatting options"><LauncherIcon /></Launcher>
      </GroupLabel>
    </Group>
  );
}

function RibbonPanel() {
  return (
    <Ribbon>
      <Group $width={47}>
        <GroupBody $pad={7}>
          <LargeButton>
            <ViewIcon />
            View
            <Caret $below />
          </LargeButton>
        </GroupBody>
        <GroupLabel $pad={0}>Views</GroupLabel>
      </Group>
      <Group $width={143}>
        <GroupBody $pad={8} $gap={6}>
          <LargeButton disabled>
            <PasteIcon />
            Paste
            <Caret $below $faded />
          </LargeButton>
          <SmallColumn>
            <Small icon={<CutIcon />} label="Cut" disabled />
            <Small icon={<CopyIcon />} label="Copy" />
            <Small icon={<PainterIcon />} label="Format Painter" disabled />
          </SmallColumn>
        </GroupBody>
        <GroupLabel $pad={18}>
          Clipboard
          <Launcher aria-label="Clipboard options"><LauncherIcon /></Launcher>
        </GroupLabel>
      </Group>
      <Group $width={216}>
        <GroupBody $pad={7} $gap={6}>
          <LargeButton>
            <FilterIcon />
            Filter
          </LargeButton>
          <SmallColumn $width={80}>
            <Small icon={<SortIcon top="A" bottom="Z" topColor="#3a5b9b" bottomColor="#a03a3a" />} label="Ascending" />
            <Small icon={<SortIcon top="Z" bottom="A" topColor="#a03a3a" bottomColor="#3a5b9b" />} label="Descending" />
            <Small icon={<RemoveSortIcon />} label="Remove Sort" disabled />
          </SmallColumn>
          <SmallColumn>
            <Small icon={<SelectionIcon />} label="Selection" caret />
            <Small icon={<AdvancedIcon />} label="Advanced" caret />
            <Small icon={<FunnelIcon />} label="Toggle Filter" disabled />
          </SmallColumn>
        </GroupBody>
        <GroupLabel $pad={0}>Sort &amp; Filter</GroupLabel>
      </Group>
      <Group $width={178}>
        <GroupBody $pad={4} $gap={4}>
          <LargeButton $width={40}>
            <RefreshIcon />
            Refresh
            <span>
              All <Caret />
            </span>
          </LargeButton>
          <SmallColumn $width={60}>
            <Small icon={<NewIcon />} label="New" />
            <Small icon={<SaveRecordIcon />} label="Save" />
            <Small icon={<DeleteIcon />} label="Delete" caret disabled />
          </SmallColumn>
          <SmallColumn>
            <Small icon={<SigmaIcon />} label="Totals" />
            <Small icon={<SpellingIcon />} label="Spelling" />
            <Small icon={<MoreIcon />} label="More" caret />
          </SmallColumn>
        </GroupBody>
        <GroupLabel $pad={0}>Records</GroupLabel>
      </Group>
      <Group $width={110}>
        <GroupBody $pad={7}>
          <LargeButton>
            <FindIcon />
            Find
          </LargeButton>
          <SmallColumn>
            <Small icon={<ReplaceIcon />} label="Replace" />
            <Small icon={<GoToIcon />} label="Go To" caret />
            <Small icon={<CursorIcon />} label="Select" caret />
          </SmallColumn>
        </GroupBody>
        <GroupLabel $pad={0}>Find</GroupLabel>
      </Group>
      <TextFormatting />
    </Ribbon>
  );
}

function Datasheet() {
  return (
    <Grid>
      <colgroup>
        <col style={{ width: 16 }} />
        <col style={{ width: 15 }} />
        <col style={{ width: 90 }} />
        <col style={{ width: 114 }} />
        <col style={{ width: 108 }} />
      </colgroup>
      <thead>
        <tr>
          <HeadCell colSpan={2} aria-label="Row selector" />
          <HeadCell $active>
            <HeadInner><span>ID</span><Caret /></HeadInner>
          </HeadCell>
          <HeadCell>
            <HeadInner><span>CouponType</span><Caret /></HeadInner>
          </HeadCell>
          <HeadCell $italic>
            <HeadInner $left><span>Click to Add</span><Caret /></HeadInner>
          </HeadCell>
        </tr>
      </thead>
      <tbody>
        {couponTypes.map(([id, name], index) => (
          <Row key={id} $current={index === 0}>
            <Selector $current={index === 0} />
            <ExpandCell>
              <ExpandButton aria-label={`Expand ${id}`}>
                <svg width="5" height="5" viewBox="0 0 5 5">
                  <path d="M0 2.500h5M2.500 0v5" stroke="#222" />
                </svg>
              </ExpandButton>
            </ExpandCell>
            <IdCell $current={index === 0}>{index === 0 ? <mark>{id}</mark> : id}</IdCell>
            <NameCell>{name}</NameCell>
            <td />
          </Row>
        ))}
        <Row>
          <Selector>
            <svg width="9" height="9" viewBox="0 0 9 9">
              <path d="M4.500 0v9M0 4.500h9M1.500 1.500l6 6M7.500 1.500l-6 6" stroke="#222" />
            </svg>
          </Selector>
          <ExpandCell />
          <IdCell>(New)</IdCell>
          <NameCell />
          <td />
        </Row>
      </tbody>
    </Grid>
  );
}

function MenuForm() {
  const [activeTab, setActiveTab] = useState('Tables');

  return (
    <MenuWindow aria-label="Menu">
      <MenuTitle>
        <FormIcon />
        Menu
        <button aria-label="Close menu">
          <CloseX />
        </button>
      </MenuTitle>
      <MenuBody>
        <MenuTabs>
          {menuTabs.map((tab) => (
            <MenuTab key={tab} $active={tab === activeTab} onClick={() => setActiveTab(tab)}>
              {tab}
            </MenuTab>
          ))}
        </MenuTabs>
        <MenuPanel>
          {activeTab === 'Tables' &&
            menuButtons.map((label) => <FormButton key={label}>{label}</FormButton>)}
        </MenuPanel>
        <MenuFooter>
          <FormButton $width={129}>Minimize Menu</FormButton>
          <FormButton $width={99}>Help</FormButton>
          <FormButton $width={92}>Close</FormButton>
        </MenuFooter>
      </MenuBody>
    </MenuWindow>
  );
}

function App() {
  return (
    <>
      <GlobalStyle />
      <Screen>
        <TopHeader />
        <RibbonPanel />
        <QuickAccess>
          <button aria-label="Save"><FloppyIcon /></button>
          <ToolButton aria-label="Undo"><UndoIcon /><Caret $faded /></ToolButton>
          <ToolButton aria-label="Redo"><UndoIcon flip /><Caret $faded /></ToolButton>
          <button aria-label="Customize toolbar">
            <svg width="8" height="7" viewBox="0 0 8 7">
              <path d="M1 0h6v1H1zM1 3h6L4 6z" fill="#222" />
            </svg>
          </button>
        </QuickAccess>
        <WorkArea>
          <NavPane>
            <NavToggle aria-label="Open navigation pane">
              <svg width="9" height="8" viewBox="0 0 9 8" fill="none">
                <path d="M1 1l3 3-3 3M5 1l3 3-3 3" stroke="#333" strokeWidth="1.200" />
              </svg>
            </NavToggle>
            <NavBody><span>Navigation Pane</span></NavBody>
          </NavPane>
          <Document>
            <DocTabs>
              {docTabs.map(({ label, icon: TabIcon, width, active }, index) => (
                <DocTab key={label} $width={width} $active={active} $order={docTabs.length - index}>
                  <TabIcon />
                  {label}
                </DocTab>
              ))}
              <DocClose aria-label="Close tab">
                <svg width="9" height="9" viewBox="0 0 9 9">
                  <path d="M1 1l7 7M8 1L1 8" stroke="#333" strokeWidth="1.200" />
                </svg>
              </DocClose>
            </DocTabs>
            <Sheet>
              <Datasheet />
            </Sheet>
            <RecordBar>
              <label htmlFor="record">Record:</label>
              <RecordButton aria-label="First record"><RecordIcon kind="first" /></RecordButton>
              <RecordButton aria-label="Previous record"><RecordIcon kind="previous" /></RecordButton>
              <RecordInput id="record" defaultValue="1 of 22" $width={48} />
              <RecordButton aria-label="Next record"><RecordIcon kind="next" /></RecordButton>
              <RecordButton aria-label="Last record"><RecordIcon kind="last" /></RecordButton>
              <RecordButton aria-label="New record">
                <RecordIcon kind="next" />
                <svg width="6" height="8" viewBox="0 0 6 8">
                  <path d="M0 1h6v6H0z" fill="#e9e45c" />
                </svg>
              </RecordButton>
              <NoFilter>
                <Icon size={12}>
                  <path d="M1 2h11L8 7v7l-3-2V7zM8 8l7 6M15 8l-7 6" stroke="#a3a6a8" strokeWidth="1.500" fill="#c4c6c8" />
                </Icon>
                No Filter
              </NoFilter>
              <RecordInput placeholder="Search" aria-label="Search" $width={64} />
            </RecordBar>
          </Document>
          <MenuForm />
          <Pointer width="12" height="19" viewBox="0 0 12 19">
            <path d="M1 1v14l3-3 2.500 6 2.500-1-2.500-6H11z" fill="#fff" stroke="#333" />
          </Pointer>
        </WorkArea>
        <StatusBar>
          Datasheet View
          <StatusRight>
            <span>Num Lock</span>
            <ViewButton $active aria-label="Datasheet view"><ViewGlyph kind="datasheet" /></ViewButton>
            <ViewButton aria-label="Pivot table view"><ViewGlyph kind="pivot" /></ViewButton>
            <ViewButton aria-label="Pivot chart view"><ViewGlyph kind="chart" /></ViewButton>
            <ViewButton aria-label="Design view"><ViewGlyph kind="design" /></ViewButton>
          </StatusRight>
        </StatusBar>
      </Screen>
    </>
  );
}

export default App;
